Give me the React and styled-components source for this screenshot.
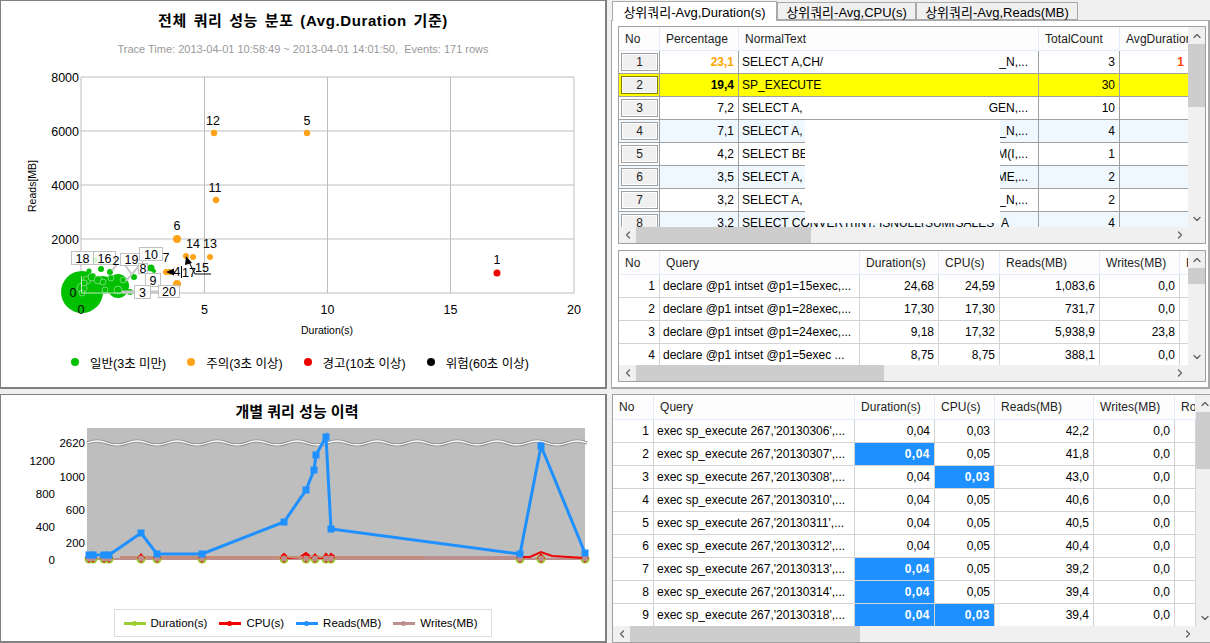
import React from "react";
import styled, { createGlobalStyle } from "styled-components";
import { ChevronUp, ChevronDown, ChevronLeft, ChevronRight } from "lucide-react";

const GlobalStyle = createGlobalStyle`
  html, body {
    margin: 0;
    padding: 0;
    background: #f0f0f0;
    overflow: hidden;
  }
  * { box-sizing: border-box; }
`;

const FONT = `"Liberation Sans", "Noto Sans CJK KR", sans-serif`;

const Page = styled.div`
  width: 1210px;
  height: 643px;
  display: grid;
  grid-template-columns: 607px 599px;
  column-gap: 4px;
  font-family: ${FONT};
  color: #000;
  overflow: hidden;
`;
const Column = styled.div`
  display: flex;
  flex-direction: column;
  gap: 5px;
  min-width: 0;
`;
const ChartPanel = styled.div`
  height: ${(p) => p.$height}px;
  flex: none;
  background: #fff;
  border: 1px solid #808080;
  border-width: 1px 2px 2px 1px;
  display: flex;
  flex-direction: column;
  align-items: center;
`;
const ChartTitle = styled.div`
  height: ${(p) => p.$height}px;
  flex: none;
  display: flex;
  align-items: center;
  justify-content: center;
  width: 100%;
  padding-right: ${(p) => p.$shift || 0}px;
  font-size: 15px;
  font-weight: 700;
  letter-spacing: ${(p) => p.$tracking || 0}px;
  word-spacing: ${(p) => (p.$tracking ? 2 : 0)}px;
  white-space: pre;
`;
const ChartSub = styled.div`
  height: 24px;
  flex: none;
  font-size: 11px;
  line-height: 22px;
  color: #999;
  white-space: pre;
`;
const Plot = styled.svg`
  display: block;
  flex: none;
`;
const T = styled.text`
  font-family: ${FONT};
  font-size: ${(p) => p.$size || 12.5}px;
  fill: #000;
`;
const Legend = styled.div`
  display: flex;
  align-items: center;
  gap: 21px;
  height: 34px;
  padding-right: 6px;
  font-size: 12.5px;
`;
const LegendItem = styled.div`
  display: flex;
  align-items: center;
  gap: 11px;
`;
const Dot = styled.span`
  width: 8px;
  height: 8px;
  border-radius: 50%;
  background: ${(p) => p.$color};
`;
const LineLegend = styled.div`
  margin: 9px 0 0 -1px;
  height: 28px;
  width: 378px;
  display: flex;
  align-items: center;
  gap: 12px;
  padding-left: 9px;
  border: 1px solid #ddd;
  font-size: 11.5px;
`;
const LineItem = styled.div`
  display: flex;
  align-items: center;
  gap: 5px;
`;
const Swatch = styled.span`
  position: relative;
  width: 22px;
  height: 3px;
  background: ${(p) => p.$color};
  &::after {
    content: "";
    position: absolute;
    left: 8px;
    top: -1px;
    width: 5px;
    height: 5px;
    border-radius: 50%;
    background: ${(p) => p.$color};
  }
`;

const TabArea = styled.div`
  height: 389px;
  flex: none;
  display: flex;
  flex-direction: column;
`;
const TabStrip = styled.div`
  height: 20px;
  flex: none;
  display: flex;
  align-items: flex-end;
  padding-left: 1px;
`;
const Tab = styled.div`
  height: ${(p) => (p.$active ? 20 : 18)}px;
  width: ${(p) => p.$width}px;
  display: flex;
  align-items: center;
  justify-content: center;
  background: ${(p) => (p.$active ? "#fff" : "#f0f0f0")};
  border: 1px solid #a9a9a9;
  border-bottom: ${(p) => (p.$active ? "none" : "1px solid #a9a9a9")};
  margin-bottom: ${(p) => (p.$active ? -1 : 0)}px;
  position: relative;
  font-size: 13px;
  white-space: pre;
`;
const TabBody = styled.div`
  flex: 1;
  background: #fff;
  border: 1px solid #a9a9a9;
  border-width: 1px 2px 2px 1px;
  padding: 5px 2px 0 6px;
  display: flex;
  flex-direction: column;
  gap: 6px;
`;
const GridFrame = styled.div`
  position: relative;
  height: ${(p) => p.$height}px;
  flex: none;
  margin-left: ${(p) => p.$left || 0}px;
  width: ${(p) => p.$width}px;
  background: #fff;
  border: 1px solid #a0a0a0;
  display: grid;
  grid-template-columns: 1fr 17px;
  grid-template-rows: 1fr 16px;
  font-size: 12px;
  letter-spacing: 0.05px;
`;
const GridView = styled.div`
  overflow: hidden;
  min-width: 0;
`;
const HeadRow = styled.div`
  display: grid;
  grid-template-columns: ${(p) => p.$cols};
  height: ${(p) => p.$height}px;
`;
const HeadCell = styled.div`
  padding-left: 6px;
  display: flex;
  align-items: center;
  background: #fdfdfd;
  border-right: 1px solid #e3eefa;
  border-bottom: 1px solid #e3eefa;
  overflow: hidden;
  white-space: nowrap;
  color: #222;
`;
const Row = styled.div`
  display: grid;
  grid-template-columns: ${(p) => p.$cols};
  height: 23px;
  background: ${(p) => p.$bg || "#fff"};
`;
const Cell = styled.div`
  display: flex;
  align-items: center;
  justify-content: ${(p) => (p.$align === "left" ? "space-between" : "flex-end")};
  padding: 0 ${(p) => (p.$align === "left" ? "10px 0 3px" : "4px")};
  border-right: 1px solid ${(p) => p.$line};
  border-bottom: 1px solid ${(p) => p.$line};
  background: ${(p) => (p.$on ? "#1e90ff" : "transparent")};
  color: ${(p) => (p.$on ? "#fff" : p.$color || "#000")};
  font-weight: ${(p) => (p.$on || p.$bold ? 700 : 400)};
  letter-spacing: ${(p) => (p.$on ? "0.5px" : "0")};
  overflow: hidden;
  white-space: nowrap;
`;
const RowButton = styled.div`
  margin: 2px 1px 2px 2px;
  display: flex;
  align-items: center;
  justify-content: center;
  background: #f0f0f0;
  border: 1px solid ${(p) => (p.$selected ? "#808000" : "#a0a0a0")};
  box-shadow: inset 0 0 0 1px #fff;
  color: #222;
`;
const ButtonCell = styled.div`
  display: flex;
  flex-direction: column;
  border-right: 1px solid ${(p) => p.$line};
  border-bottom: 1px solid ${(p) => p.$line};
  > div { flex: 1; }
`;
const VBar = styled.div`
  background: #f0f0f0;
  display: flex;
  flex-direction: column;
  min-height: 0;
`;
const HBar = styled.div`
  background: #f0f0f0;
  display: flex;
  min-width: 0;
`;
const Corner = styled.div`
  background: #f0f0f0;
`;
const Arrow = styled.div`
  flex: none;
  width: ${(p) => (p.$h ? "17px" : "auto")};
  height: ${(p) => (p.$h ? "auto" : "17px")};
  display: flex;
  align-items: center;
  justify-content: center;
  color: #606060;
`;
const Thumb = styled.div`
  flex: none;
  background: #cdcdcd;
  ${(p) => (p.$h ? `width: ${p.$size}px;` : `height: ${p.$size}px;`)}
`;
const Spacer = styled.div`
  flex: 1;
`;
const Redaction = styled.div`
  position: absolute;
  left: 186px;
  top: 93px;
  width: 195px;
  height: 103px;
  background: #fff;
`;

const gridOneCols = "41px 79px 300px 81px 69px";
const gridOneHead = ["No", "Percentage", "NormalText", "TotalCount", "AvgDuration"];
const gridOneRows = [
  { p: "23,1", left: "SELECT A,CH/", right: "_N,...", n: 3 },
  { p: "19,4", left: "SP_EXECUTE", right: "", n: 30, selected: true },
  { p: "7,2", left: "SELECT A,", right: "GEN,...", n: 10 },
  { p: "7,1", left: "SELECT A,", right: "I_N,...", n: 4, tint: true },
  { p: "4,2", left: "SELECT BE", right: "JM(I,...", n: 1 },
  { p: "3,5", left: "SELECT A,", right: "AME,...", n: 2, tint: true },
  { p: "3,2", left: "SELECT A,", right: "I_N,...", n: 2 },
  { p: "3,2", left: "SELECT CONVERT(INT, ISNULL(SUM(SALES_A", right: "", n: 4, tint: true },
];

const gridTwoCols = "41px 200px 79px 61px 100px 80px 9px";
const detailHead = ["No", "Query", "Duration(s)", "CPU(s)", "Reads(MB)", "Writes(MB)", "Rows"];
const gridTwoRows = [
  ["declare @p1 intset @p1=15exec,...", "24,68", "24,59", "1,083,6", "0,0"],
  ["declare @p1 intset @p1=28exec,...", "17,30", "17,30", "731,7", "0,0"],
  ["declare @p1 intset @p1=24exec,...", "9,18", "17,32", "5,938,9", "23,8"],
  ["declare @p1 intset @p1=5exec ...", "8,75", "8,75", "388,1", "0,0"],
];

const gridThreeCols = "41px 201px 80px 60px 99px 81px 21px";
const gridThreeRows = [
  ["20130306", false, "0,03", false, "42,2"],
  ["20130307", true, "0,05", false, "41,8"],
  ["20130308", false, "0,03", true, "43,0"],
  ["20130310", false, "0,05", false, "40,6"],
  ["20130311", false, "0,05", false, "40,5"],
  ["20130312", false, "0,05", false, "40,4"],
  ["20130313", true, "0,05", false, "39,2"],
  ["20130314", true, "0,05", false, "39,4"],
  ["20130318", true, "0,03", true, "39,4"],
];

const Scrollbars = ({ vSize, hSize }) => (
  <>
    <VBar>
      <Arrow><ChevronUp size={12} strokeWidth={2.5} /></Arrow>
      <Thumb $size={vSize} />
      <Spacer />
      <Arrow><ChevronDown size={12} strokeWidth={2.5} /></Arrow>
    </VBar>
    <HBar>
      <Arrow $h><ChevronLeft size={12} strokeWidth={2.5} /></Arrow>
      <Thumb $h $size={hSize} />
      <Spacer />
      <Arrow $h><ChevronRight size={12} strokeWidth={2.5} /></Arrow>
    </HBar>
    <Corner />
  </>
);

const TopGrid = () => {
  const line = "#a0a0a0";
  return (
    <GridFrame $height={218} $width={588}>
      <GridView>
        <HeadRow $cols={gridOneCols} $height={24}>
          {gridOneHead.map((h) => <HeadCell key={h}>{h}</HeadCell>)}
        </HeadRow>
        {gridOneRows.map((r, i) => (
          <Row key={i} $cols={gridOneCols} $bg={r.selected ? "#ffff00" : r.tint ? "#f0f8ff" : "#fff"}>
            <ButtonCell $line={line}>
              <RowButton $selected={r.selected}>{i + 1}</RowButton>
            </ButtonCell>
            <Cell $line={line} $bold={i < 2} $color={i === 0 ? "#ffa500" : undefined}>{r.p}</Cell>
            <Cell $line={line} $align="left"><span>{r.left}</span><span>{r.right}</span></Cell>
            <Cell $line={line}>{r.n}</Cell>
            <Cell $line={line} $bold $color="#ff4500">{i === 0 ? "1" : ""}</Cell>
          </Row>
        ))}
      </GridView>
      <Scrollbars vSize={63} hSize={175} />
      <Redaction />
    </GridFrame>
  );
};

const DetailGrid = () => {
  const line = "#d3d3d3";
  return (
    <GridFrame $height={132} $width={588}>
      <GridView>
        <HeadRow $cols={gridTwoCols} $height={24}>
          {detailHead.map((h) => <HeadCell key={h}>{h}</HeadCell>)}
        </HeadRow>
        {gridTwoRows.map((r, i) => (
          <Row key={i} $cols={gridTwoCols}>
            <Cell $line={line}>{i + 1}</Cell>
            <Cell $line={line} $align="left"><span>{r[0]}</span></Cell>
            <Cell $line={line}>{r[1]}</Cell>
            <Cell $line={line}>{r[2]}</Cell>
            <Cell $line={line}>{r[3]}</Cell>
            <Cell $line={line}>{r[4]}</Cell>
            <Cell $line={line} />
          </Row>
        ))}
      </GridView>
      <Scrollbars vSize={16} hSize={248} />
    </GridFrame>
  );
};

const HistoryGrid = () => {
  const line = "#d3d3d3";
  return (
    <GridFrame $height={249} $width={602} $left={1}>
      <GridView>
        <HeadRow $cols={gridThreeCols} $height={25}>
          {detailHead.map((h) => <HeadCell key={h}>{h}</HeadCell>)}
        </HeadRow>
        {gridThreeRows.map((r, i) => (
          <Row key={i} $cols={gridThreeCols}>
            <Cell $line={line}>{i + 1}</Cell>
            <Cell $line={line} $align="left"><span>{`exec sp_execute 267,'${r[0]}',...`}</span></Cell>
            <Cell $line={line} $on={r[1]}>0,04</Cell>
            <Cell $line={line} $on={r[3]}>{r[2]}</Cell>
            <Cell $line={line}>{r[4]}</Cell>
            <Cell $line={line}>0,0</Cell>
            <Cell $line={line} />
          </Row>
        ))}
      </GridView>
      <Scrollbars vSize={57} hSize={230} />
    </GridFrame>
  );
};

const GRID = "#bdbdbd";
const GREEN = "#00c000";
const ORANGE = "#ffa31a";

const orangeDots = [
  [214, 133, 3.2], [307, 133, 3.2], [216, 200, 3.2], [177, 239, 4], [186, 256, 3],
  [193, 257, 3], [210, 257, 3], [166, 272, 3], [169, 272, 3], [177, 284, 4],
];
const greenDots = [
  [95, 260, 3], [89, 271, 2.5], [101, 269, 3], [110, 272, 3], [134, 277, 3],
  [151, 268, 3.5], [154, 271, 2], [130, 292, 3],
];
const clusterDots = [
  [87, 280, 4], [82, 288, 5], [84, 283, 3], [92, 277, 4], [98, 280, 4], [103, 282, 3],
  [111, 278, 3], [105, 290, 3], [118, 290, 4], [123, 280, 3], [82, 293, 3],
];
const boxes = [
  [71, 251, 22, 13, "18"], [93, 251, 22, 13, "16"], [120, 253, 22, 12, "19"], [139, 247, 23, 13, "10"],
  [138, 263, 9, 10, "8"], [145, 273, 15, 13, "9"], [134, 285, 16, 13, "3"], [158, 285, 21, 12, "20"],
];
const plainLabels = [
  [213, 125, "12"], [307, 125, "5"], [215, 192, "11"], [177, 230, "6"], [193, 248, "14"], [210, 248, "13"],
  [166, 262, "7"], [177, 276, "4"], [189, 277, "17"], [202, 272, "15"], [116, 265, "2"], [497, 264, "1"],
];

const BubbleChart = () => (
  <Plot width={604} height={283} viewBox="1 62 604 283">
    {[81, 204.5, 327.5, 450.5, 574].map((x) => <line key={x} x1={x} x2={x} y1={77} y2={293} stroke={GRID} />)}
    {[77, 131, 185, 239, 293].map((y) => <line key={y} x1={81} x2={574} y1={y} y2={y} stroke={GRID} />)}

    <circle cx={82} cy={292} r={21} fill={GREEN} />
    <ellipse cx={100} cy={285} rx={20} ry={9} fill={GREEN} />
    <ellipse cx={118} cy={286} rx={11} ry={12} fill={GREEN} />
    {greenDots.map(([x, y, r], i) => <circle key={i} cx={x} cy={y} r={r} fill={GREEN} />)}
    {clusterDots.map(([x, y, r], i) => (
      <circle key={i} cx={x} cy={y} r={r} fill={GREEN} stroke="#8fe08f" strokeWidth={0.8} />
    ))}
    <line x1={81.5} x2={81.5} y1={276} y2={293} stroke="#c4e8c4" />
    <line x1={81} x2={140} y1={293} y2={293} stroke="#c4e8c4" />

    {[["8000", 77], ["6000", 131], ["4000", 185], ["2000", 239]].map(([t, y]) => (
      <T key={t} x={79} y={y + 5} textAnchor="end">{t}</T>
    ))}
    <T x={73} y={297} textAnchor="middle">0</T>
    {[["0", 81], ["5", 204.5], ["10", 327.5], ["15", 450.5], ["20", 574]].map(([t, x]) => (
      <T key={t} x={x} y={314} textAnchor="middle">{t}</T>
    ))}
    <T $size={10.5} x={327} y={334} textAnchor="middle">Duration(s)</T>
    <T $size={10.5} transform="translate(36 186) rotate(-90)" textAnchor="middle">Reads[MB]</T>

    {orangeDots.map(([x, y, r], i) => <circle key={i} cx={x} cy={y} r={r} fill={ORANGE} />)}
    <circle cx={497} cy={273} r={3.5} fill="#f00000" />

    <g stroke="#c8c8c8" strokeWidth={2} fill="none">
      <line x1={117} y1={264} x2={112} y2={271} />
      <line x1={125} y1={265} x2={132} y2={275} />
      <line x1={139} y1={266} x2={126} y2={281} />
      <line x1={158} y1={292} x2={122} y2={292} strokeWidth={3} />
    </g>
    {boxes.map(([x, y, w, h, t]) => (
      <g key={t}>
        <rect x={x + 0.5} y={y + 0.5} width={w} height={h} fill="#fff" fillOpacity={0.85} stroke="#c0c0c0" />
        <T x={x + w / 2 + 0.5} y={y + h / 2 + 5} textAnchor="middle">{t}</T>
      </g>
    ))}
    {plainLabels.map(([x, y, t]) => <T key={t} x={x} y={y} textAnchor="middle">{t}</T>)}

    <g stroke="#000" fill="none">
      <line x1={181.5} y1={266} x2={181.5} y2={278} />
      <line x1={175} y1={272} x2={170} y2={272} />
      <path d="M211 274 H195 L188 260" />
    </g>
    <path d="M166 272 L174 268.5 V275.5 Z" fill="#000" />
    <path d="M186 256 L192 263 L185 265 Z" fill="#000" />
  </Plot>
);

const readsLine = [
  [89, 555], [93, 555], [104, 555], [109, 555], [141, 533], [157, 554], [202, 554], [284, 522],
  [306, 490], [314, 470], [316, 455], [326, 437], [331, 529], [520, 554], [541, 446], [585, 553],
];
const baseMarks = [89, 93, 104, 109, 141, 157, 202, 284, 306, 315, 326, 331, 520, 541, 585];
const redLine = "280,558 284,554 288,558 300,557 306,553 312,558 315,555 318,558 323,558 326,554 329,558 331,554 335,557";
const redTail = "520,557 530,557 541,552 552,556 585,558";

const makeWave = () => {
  let d = "M87 443 q10 -4 20 0";
  for (let x = 107; x < 585; x += 20) d += " t20 0";
  return d;
};

const HistoryChart = () => (
  <Plot width={604} height={175} viewBox="1 425 604 175">
    <rect x={87} y={428} width={498} height={132} fill="#bebebe" />
    <path d={makeWave()} fill="none" stroke="#8a8a8a" strokeWidth={3} />
    <path d={makeWave()} fill="none" stroke="#fff" strokeWidth={1.3} />
    {[["2620", 85, 447], ["1200", 55, 465], ["1000", 85, 481], ["800", 55, 498], ["600", 85, 514], ["400", 55, 531], ["200", 85, 547], ["0", 55, 564]].map(([t, x, y]) => (
      <T key={t} $size={11.5} x={x} y={y} textAnchor="end">{t}</T>
    ))}
    <line x1={87} x2={585} y1={559} y2={559} stroke="#bc8f8f" strokeWidth={2} />
    {baseMarks.map((x) => <circle key={x} cx={x} cy={559} r={4.5} fill="#9acd32" />)}
    <polyline points={redLine} fill="none" stroke="#f00000" strokeWidth={2} />
    <polyline points={redTail} fill="none" stroke="#f00000" strokeWidth={2} />
    <line x1={120} x2={424} y1={557} y2={557} stroke="#c88a70" strokeWidth={2} />
    <line x1={424} x2={520} y1={557} y2={557} stroke="#bc8f8f" strokeWidth={2} />
    {baseMarks.map((x) => <path key={x} d={`M${x - 4} 558 L${x} 553 L${x + 4} 558 L${x} 563 Z`} fill="#f00000" />)}
    {baseMarks.map((x) => <circle key={x} cx={x} cy={558.5} r={3} fill="#bc8f8f" />)}
    <polyline points={readsLine.map((p) => p.join(",")).join(" ")} fill="none" stroke="#1e90ff" strokeWidth={3} />
    {readsLine.map(([x, y]) => <rect key={x} x={x - 3.5} y={y - 3.5} width={7} height={7} fill="#1e90ff" />)}
  </Plot>
);

export default function App() {
  return (
    <Page>
      <GlobalStyle />
      <Column>
        <ChartPanel $height={389}>
          <ChartTitle $height={37} $tracking={0.6}>전체 쿼리 성능 분포 (Avg.Duration 기준)</ChartTitle>
          <ChartSub>Trace Time: 2013-04-01 10:58:49 ~ 2013-04-01 14:01:50,  Events: 171 rows</ChartSub>
          <BubbleChart />
          <Legend>
            <LegendItem><Dot $color="#00c000" />일반(3초 미만)</LegendItem>
            <LegendItem><Dot $color="#ffa31a" />주의(3초 이상)</LegendItem>
            <LegendItem><Dot $color="#f00000" />경고(10초 이상)</LegendItem>
            <LegendItem><Dot $color="#000" />위험(60초 이상)</LegendItem>
          </Legend>
        </ChartPanel>
        <ChartPanel $height={249}>
          <ChartTitle $height={30} $shift={12}>개별 쿼리 성능 이력</ChartTitle>
          <HistoryChart />
          <LineLegend>
            <LineItem><Swatch $color="#9acd32" />Duration(s)</LineItem>
            <LineItem><Swatch $color="#f00000" />CPU(s)</LineItem>
            <LineItem><Swatch $color="#1e90ff" />Reads(MB)</LineItem>
            <LineItem><Swatch $color="#bc8f8f" />Writes(MB)</LineItem>
          </LineLegend>
        </ChartPanel>
      </Column>
      <Column>
        <TabArea>
          <TabStrip>
            <Tab $active $width={165}>상위쿼리-Avg,Duration(s)</Tab>
            <Tab $width={139}>상위쿼리-Avg,CPU(s)</Tab>
            <Tab $width={162}>상위쿼리-Avg,Reads(MB)</Tab>
          </TabStrip>
          <TabBody>
            <TopGrid />
            <DetailGrid />
          </TabBody>
        </TabArea>
        <HistoryGrid />
      </Column>
    </Page>
  );
}
